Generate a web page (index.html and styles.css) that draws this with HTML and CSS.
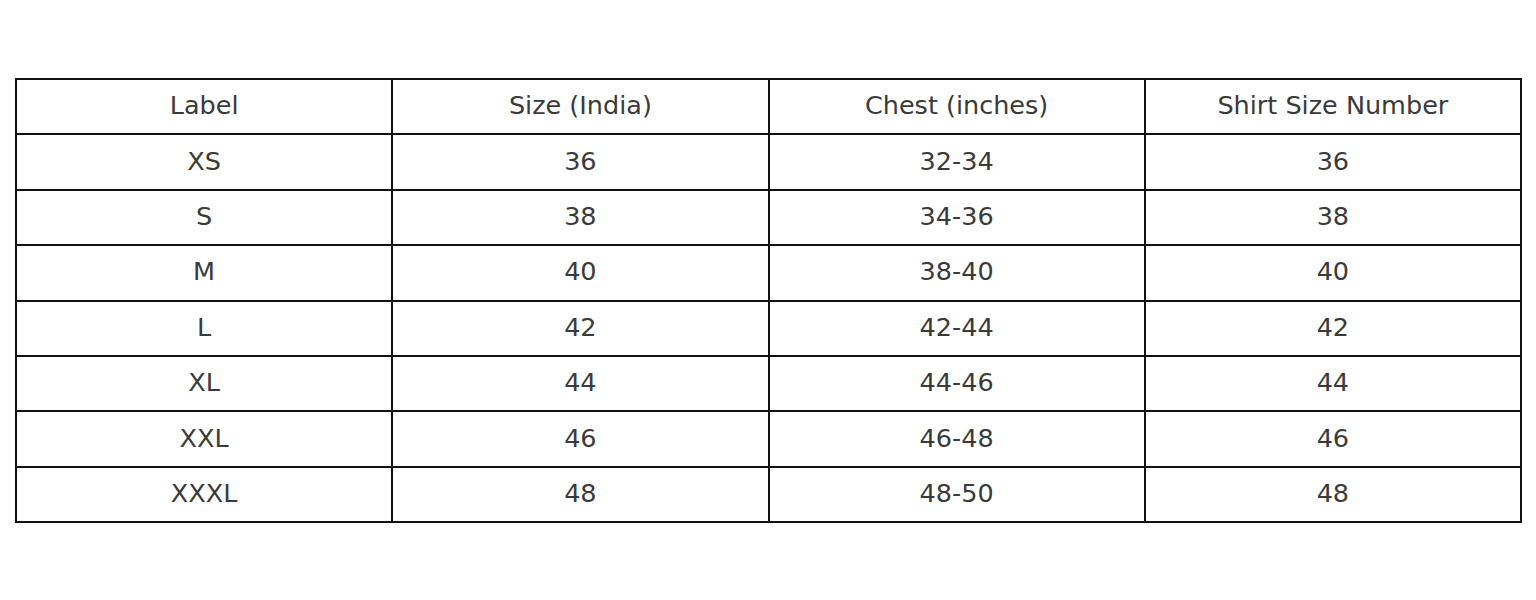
FILE: index.html
```html
<!DOCTYPE html>
<html>
<head>
<meta charset="utf-8">
<link rel="stylesheet" href="styles.css">
</head>
<body>
<div class="page">
<table class="size-table">
<thead>
<tr><th>Label</th><th>Size (India)</th><th>Chest (inches)</th><th>Shirt Size Number</th></tr>
</thead>
<tbody>
<tr><td>XS</td><td>36</td><td>32-34</td><td>36</td></tr>
<tr><td>S</td><td>38</td><td>34-36</td><td>38</td></tr>
<tr><td>M</td><td>40</td><td>38-40</td><td>40</td></tr>
<tr><td>L</td><td>42</td><td>42-44</td><td>42</td></tr>
<tr><td>XL</td><td>44</td><td>44-46</td><td>44</td></tr>
<tr><td>XXL</td><td>46</td><td>46-48</td><td>46</td></tr>
<tr><td>XXXL</td><td>48</td><td>48-50</td><td>48</td></tr>
</tbody>
</table>
</div>
</body>
</html>
```
FILE: styles.css
```css
html, body {
  margin: 0;
  padding: 0;
  background: #ffffff;
}
.page {
  padding: 78px 15px 0 15px;
}
.size-table {
  width: 1507px;
  border-collapse: collapse;
  table-layout: fixed;
  font-family: "DejaVu Sans", sans-serif;
  font-size: 25.5px;
  color: #3a3a3a;
}
.size-table th,
.size-table td {
  border: 2px solid #111111;
  height: 50.4px;
  padding: 0 0 3px 0;
  text-align: center;
  vertical-align: middle;
  font-weight: normal;
}
```
